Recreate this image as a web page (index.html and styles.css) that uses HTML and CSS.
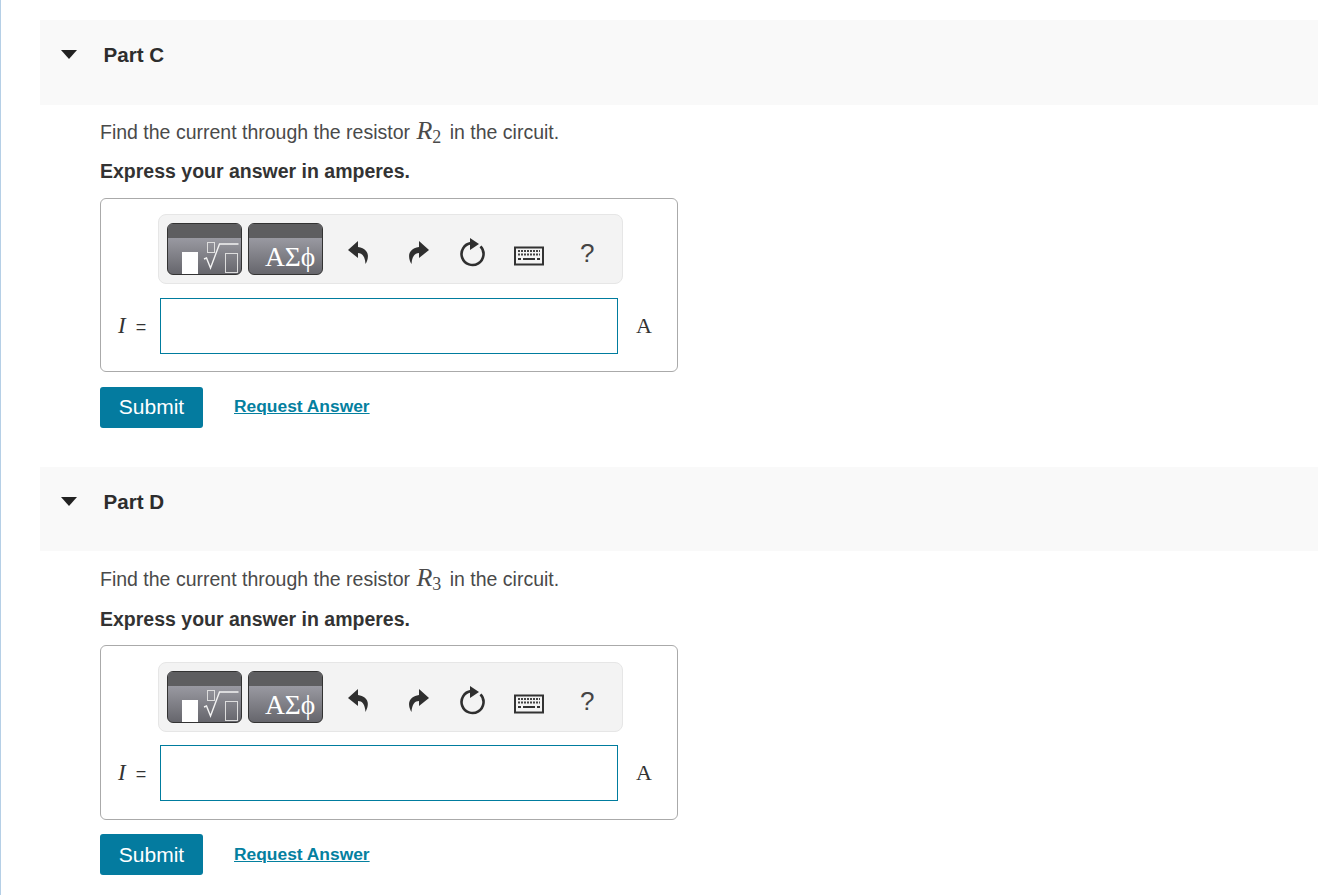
FILE: index.html
```html
<!DOCTYPE html>
<html lang="en">
<head>
<meta charset="utf-8">
<title>Parts C and D</title>
<link rel="stylesheet" href="styles.css">
</head>
<body>
<main class="page">
  <section class="part part-c">
    <header class="part-head">
      <svg class="caret" viewBox="0 0 16 9" width="16" height="9"><path d="M0 0H16L8 9Z"/></svg>
      <h2 class="part-title">Part C</h2>
    </header>
    <div class="part-body">
      <p class="prompt">Find the current through the resistor <span class="var">R</span><sub class="idx">2</sub> in the circuit.</p>
      <p class="instr">Express your answer in amperes.</p>
      <div class="answer">
        <div class="toolbar">
          <button class="tbtn" type="button"><span class="tcap"></span>
            <svg class="tmath" viewBox="0 0 75 36" width="75" height="36"><rect x="15" y="13" width="16" height="22" fill="#fff"/><rect x="40.500" y="3.500" width="7" height="10" fill="none" stroke="#ddd"/><path d="M37 20l2.500-1 4 10 9-24h19" fill="none" stroke="#f2f2f2" stroke-width="1.400"/><rect x="58.500" y="14.500" width="12" height="19" fill="none" stroke="#ddd"/></svg>
          </button>
          <button class="tbtn" type="button"><span class="tcap"></span><span class="greek">ΑΣϕ</span></button>
          <svg class="ico undo" viewBox="0 0 22 24" width="22" height="24"><path d="M10 0 0 9l10 8v-5c4 0 7 3 7.500 11 4-7 4-15-7.500-17Z"/></svg>
          <svg class="ico redo" viewBox="0 0 22 24" width="22" height="24"><path d="M12 0 22 9 12 17v-5c-4 0-7 3-7.500 11-4-7-4-15 7.500-17Z"/></svg>
          <svg class="ico reset" viewBox="0 0 25 29" width="25" height="29"><path d="M11 5.100A11 11 0 1 0 20.500 8.400" fill="none" stroke="#2f2f2f" stroke-width="2.600"/><path d="M10 0l9 6-9 6Z"/></svg>
          <svg class="ico keys" viewBox="0 0 30 20" width="30" height="20"><rect x="1" y="1.500" width="28" height="17" fill="#f4f4f4" stroke="#333" stroke-width="2"/><path d="M4 5h22M4 8.500h22" stroke="#444" stroke-width="2" stroke-dasharray="2 1"/><path d="M4 13h3M9 13h12M23 13h3" stroke="#333" stroke-width="2"/></svg>
          <span class="help">?</span>
        </div>
        <div class="entry">
          <span class="lhs"><i class="ivar">I</i> =</span>
          <input class="field" type="text" aria-label="I">
          <span class="unit">A</span>
        </div>
      </div>
      <div class="actions">
        <button class="submit" type="button">Submit</button>
        <a class="req" href="#">Request Answer</a>
      </div>
    </div>
  </section>

  <section class="part part-d">
    <header class="part-head">
      <svg class="caret" viewBox="0 0 16 9" width="16" height="9"><path d="M0 0H16L8 9Z"/></svg>
      <h2 class="part-title">Part D</h2>
    </header>
    <div class="part-body">
      <p class="prompt">Find the current through the resistor <span class="var">R</span><sub class="idx">3</sub> in the circuit.</p>
      <p class="instr">Express your answer in amperes.</p>
      <div class="answer">
        <div class="toolbar">
          <button class="tbtn" type="button"><span class="tcap"></span>
            <svg class="tmath" viewBox="0 0 75 36" width="75" height="36"><rect x="15" y="13" width="16" height="22" fill="#fff"/><rect x="40.500" y="3.500" width="7" height="10" fill="none" stroke="#ddd"/><path d="M37 20l2.500-1 4 10 9-24h19" fill="none" stroke="#f2f2f2" stroke-width="1.400"/><rect x="58.500" y="14.500" width="12" height="19" fill="none" stroke="#ddd"/></svg>
          </button>
          <button class="tbtn" type="button"><span class="tcap"></span><span class="greek">ΑΣϕ</span></button>
          <svg class="ico undo" viewBox="0 0 22 24" width="22" height="24"><path d="M10 0 0 9l10 8v-5c4 0 7 3 7.500 11 4-7 4-15-7.500-17Z"/></svg>
          <svg class="ico redo" viewBox="0 0 22 24" width="22" height="24"><path d="M12 0 22 9 12 17v-5c-4 0-7 3-7.500 11-4-7-4-15 7.500-17Z"/></svg>
          <svg class="ico reset" viewBox="0 0 25 29" width="25" height="29"><path d="M11 5.100A11 11 0 1 0 20.500 8.400" fill="none" stroke="#2f2f2f" stroke-width="2.600"/><path d="M10 0l9 6-9 6Z"/></svg>
          <svg class="ico keys" viewBox="0 0 30 20" width="30" height="20"><rect x="1" y="1.500" width="28" height="17" fill="#f4f4f4" stroke="#333" stroke-width="2"/><path d="M4 5h22M4 8.500h22" stroke="#444" stroke-width="2" stroke-dasharray="2 1"/><path d="M4 13h3M9 13h12M23 13h3" stroke="#333" stroke-width="2"/></svg>
          <span class="help">?</span>
        </div>
        <div class="entry">
          <span class="lhs"><i class="ivar">I</i> =</span>
          <input class="field" type="text" aria-label="I">
          <span class="unit">A</span>
        </div>
      </div>
      <div class="actions">
        <button class="submit" type="button">Submit</button>
        <a class="req" href="#">Request Answer</a>
      </div>
    </div>
  </section>
</main>
</body>
</html>
```
FILE: styles.css
```css
* { box-sizing: border-box; }
html, body { margin: 0; padding: 0; height: 100%; overflow: hidden; background: #fff; }
body { font-family: "Liberation Sans", Arial, sans-serif; color: #333; }
.page { height: 895px; border-left: 1px solid #b5cfe6; padding: 20px 0 0 39px; }
.part-d { margin-top: 39px; }
.part-head { display: flex; align-items: flex-start; height: 85px; background: #f9f9f9; padding: 30px 0 0 21px; }
.caret { fill: #222; margin-top: 0; flex: none; }
.part-title { margin: -7px 0 0 26.500px; font-size: 20.600px; line-height: 23px; font-weight: 700; color: #2d2d2d; }
.part-body { padding-left: 60px; }
.prompt { margin: 15px 0 0; font-size: 19.500px; line-height: 25px; color: #4a4a4a; height: 25px; }
.var { font-family: "Liberation Serif", serif; font-style: italic; font-size: 26px; line-height: 0; margin-left: 1px; }
.idx { font-family: "Liberation Serif", serif; font-size: 18px; line-height: 0; vertical-align: -4px; margin-right: 3px; }
.instr { margin: 14px 0 0; font-size: 19.500px; line-height: 25px; font-weight: 700; color: #333; }
.answer { width: 578px; height: 174px; margin-top: 14px; border: 1px solid #aaa; border-radius: 6px; padding: 15px 0 0 57px; }
.toolbar { display: flex; align-items: flex-start; width: 465px; height: 70px; background: #f3f3f3; border: 1px solid #e6e6e6; border-radius: 8px; padding: 8px 0 0 8px; }
.tbtn { position: relative; display: flex; flex-direction: column; justify-content: flex-start; width: 75px; height: 52px; padding: 0; margin: 0 6px 0 0; border: 1px solid #333; border-radius: 6px; overflow: hidden; background: linear-gradient(#9a9aa2 27%, #66666c); flex: none; }
.tcap { display: block; flex: none; height: 14px; background: #5e5e60; }
.tmath { display: block; position: absolute; left: -1px; top: 15px; }
.greek { display: block; padding-left: 16px; font-family: "Liberation Serif", serif; font-size: 27.500px; line-height: 38px; color: #fff; white-space: nowrap; text-align: left; }
.ico { flex: none; fill: #2f2f2f; }
.undo { margin: 18px 0 0 19px; }
.redo { margin: 18px 0 0 37px; }
.reset { margin: 15px 0 0 31px; }
.keys { margin: 23px 0 0 29px; }
.help { margin: 13px 0 0 36px; font-size: 26px; line-height: 34px; color: #444; }
.entry { display: flex; align-items: center; height: 56px; margin-top: 14px; margin-left: -57px; }
.lhs { width: 59px; padding-left: 17px; font-size: 18px; color: #333; white-space: nowrap; word-spacing: 5px; }
.ivar { font-family: "Liberation Serif", serif; font-size: 23px; }
.field { width: 458px; height: 56px; border: 1px solid #007c9e; background: #fff; padding: 0; flex: none; outline: 0; }
.unit { margin-left: 18px; font-family: "Liberation Serif", serif; font-size: 22px; color: #333; }
.actions { display: flex; align-items: center; margin-top: 15px; }
.submit { width: 103px; height: 41px; padding: 0 0 1px; border: 0; border-radius: 3px; background: #047b9f; color: #fff; font: 21px "Liberation Sans", Arial, sans-serif; }
.req { margin: -3px 0 0 31px; font-size: 17.400px; font-weight: 700; color: #04809f; }
.part-d .part-head { height: 84px; }
.part-d .prompt { margin-top: 16px; }
.part-d .instr { margin-top: 15px; }
.part-d .answer { height: 175px; margin-top: 13px; padding-top: 16px; }
.part-d .entry { margin-top: 13px; }
.part-d .actions { margin-top: 14px; }
.part-d .submit { padding: 1px 0 0; }
.part-d .req { margin-top: -1px; }
```
